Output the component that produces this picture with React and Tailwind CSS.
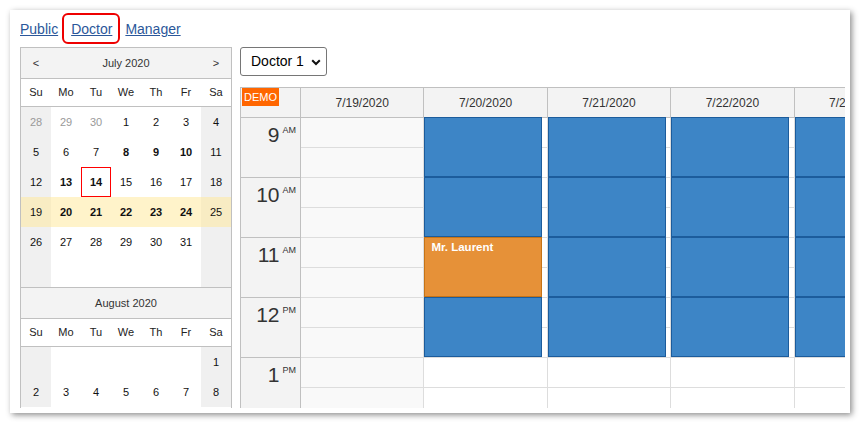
import React from "react";

const julyRows = [
  [{ d: 28, g: true }, { d: 29, g: true }, { d: 30, g: true }, { d: 1 }, { d: 2 }, { d: 3 }, { d: 4 }],
  [{ d: 5 }, { d: 6 }, { d: 7 }, { d: 8, b: true }, { d: 9, b: true }, { d: 10, b: true }, { d: 11 }],
  [{ d: 12 }, { d: 13, b: true }, { d: 14, b: true, t: true }, { d: 15 }, { d: 16 }, { d: 17 }, { d: 18 }],
  [{ d: 19 }, { d: 20, b: true }, { d: 21, b: true }, { d: 22, b: true }, { d: 23, b: true }, { d: 24, b: true }, { d: 25 }],
  [{ d: 26 }, { d: 27 }, { d: 28 }, { d: 29 }, { d: 30 }, { d: 31 }, { d: "" }],
  [{ d: "" }, { d: "" }, { d: "" }, { d: "" }, { d: "" }, { d: "" }, { d: "" }],
];

const augRows = [
  [{ d: "" }, { d: "" }, { d: "" }, { d: "" }, { d: "" }, { d: "" }, { d: 1 }],
  [{ d: 2 }, { d: 3 }, { d: 4 }, { d: 5 }, { d: 6 }, { d: 7 }, { d: 8 }],
];

const dayNames = ["Su", "Mo", "Tu", "We", "Th", "Fr", "Sa"];

function Month({ title, rows, arrows, selRow, bottomBorder }) {
  return (
    <div>
      <div className="grid grid-cols-[repeat(7,30px)] h-[31px] border-b border-[#c0c0c0] bg-[#f3f3f3] items-center text-[#333] text-[11px]">
        <div className="text-center">{arrows ? "<" : ""}</div>
        <div className="col-span-5 text-center">{title}</div>
        <div className="text-center">{arrows ? ">" : ""}</div>
      </div>
      <div className="grid grid-cols-[repeat(7,30px)] h-[28px] border-b border-[#c0c0c0] bg-white items-center text-[#222] text-[11px]">
        {dayNames.map((n) => (
          <div key={n} className="text-center">{n}</div>
        ))}
      </div>
      <div className={"grid grid-cols-[repeat(7,30px)] text-[11px] " + (bottomBorder ? "border-b border-[#c0c0c0]" : "")}>
        {rows.map((row, ri) =>
          row.map((c, ci) => {
            const weekend = ci === 0 || ci === 6;
            const sel = ri === selRow;
            let bg = weekend ? "bg-[#f0f0f0]" : "bg-white";
            if (sel) bg = weekend ? "bg-[#f8ecc3]" : "bg-[#fff3ca]";
            return (
              <div
                key={ri + "-" + ci}
                className={
                  "h-[30px] flex items-center justify-center " +
                  bg +
                  (c.g ? " text-[#999]" : " text-[#111]") +
                  (c.b ? " font-bold" : "") +
                  (c.t ? " border border-[#ff0000]" : "")
                }
              >
                {c.d}
              </div>
            );
          })
        )}
      </div>
    </div>
  );
}

const days = ["7/19/2020", "7/20/2020", "7/21/2020", "7/22/2020", "7/23/2020"];
const hours = [
  { h: "9", s: "AM" },
  { h: "10", s: "AM" },
  { h: "11", s: "AM" },
  { h: "12", s: "PM" },
  { h: "1", s: "PM" },
];
const topClasses = ["top-[-1px]", "top-[59px]", "top-[119px]", "top-[179px]"];

function DayColumn({ label, index }) {
  const weekend = index === 0;
  const hasEvents = index >= 1;
  return (
    <div className="w-[123.4px] shrink-0">
      <div className="h-[30px] bg-[#f3f3f3] border-b border-r border-[#c0c0c0] flex items-center justify-center text-[12px] text-[#333] whitespace-nowrap">
        {label}
      </div>
      <div className="relative">
        {Array.from({ length: 10 }).map((_, i) => (
          <div
            key={i}
            className={"h-[30px] border-b border-r border-[#dddddd] " + (weekend ? "bg-[#f9f9f9]" : "bg-white")}
          />
        ))}
        {hasEvents &&
          topClasses.map((tc, i) => {
            const orange = index === 1 && i === 2;
            return (
              <div
                key={i}
                className={
                  "absolute left-0 w-[118px] h-[60px] border " +
                  tc +
                  (orange
                    ? " bg-[#e69138] border-[#c77416]"
                    : " bg-[#3d85c6] border-[#1c5c9c]")
                }
              >
                {orange && (
                  <div className="pl-[6px] pt-[2px] text-[11.5px] leading-[14px] font-bold text-white">
                    Mr. Laurent
                  </div>
                )}
              </div>
            );
          })}
      </div>
    </div>
  );
}

export default function App() {
  return (
    <div className="w-[860px] h-[423px] bg-white p-[10px] font-['Liberation_Sans',Arial,sans-serif]">
      <div className="w-[840px] h-[403px] bg-white shadow-[2px_2px_6px_rgba(0,0,0,0.45)]">
        <div className="h-[398px] overflow-hidden pl-[10px] pt-[9px]">
          <div className="flex gap-[13px] h-[20px] text-[14px] leading-[20px] text-[#2b579a]">
            <a href="#" className="underline">Public</a>
            <a href="#" className="underline relative">
              Doctor
              <span className="absolute left-[-9px] right-[-8px] top-[-6px] bottom-[-5px] border-2 border-[#ee0000] rounded-[6px]" />
            </a>
            <a href="#" className="underline">Manager</a>
          </div>
          <div className="flex gap-[8px] mt-[8px]">
            <div className="w-[212px] shrink-0 border-l border-r border-t border-[#c0c0c0]">
              <Month title="July 2020" rows={julyRows} arrows selRow={3} bottomBorder />
              <Month title="August 2020" rows={augRows} />
            </div>
            <div className="w-[605px] shrink-0 overflow-hidden">
              <div className="relative w-[87px] h-[29px]">
                <select className="appearance-none w-full h-full border border-[#767676] rounded-[3px] bg-white pl-[10px] text-[14px] text-black">
                  <option>Doctor 1</option>
                  <option>Doctor 2</option>
                </select>
                <svg className="absolute right-[6px] top-[12px] pointer-events-none" width="10" height="7" viewBox="0 0 10 7">
                  <path d="M1.2 1.2L5 5L8.8 1.2" fill="none" stroke="#111" strokeWidth="2" />
                </svg>
              </div>
              <div className="mt-[11px] flex border-l border-t border-[#c0c0c0] w-[700px]">
                <div className="w-[60px] shrink-0">
                  <div className="h-[30px] bg-[#f3f3f3] border-b border-r border-[#c0c0c0] pl-[1px]">
                    <div className="w-fit h-[18px] bg-[#ff6600] text-white text-[11px] leading-[18px] px-[2px]">
                      DEMO
                    </div>
                  </div>
                  {hours.map((h) => (
                    <div
                      key={h.h}
                      className="h-[60px] bg-[#f3f3f3] border-b border-r border-[#c0c0c0] flex justify-end items-start pr-[4px] pt-[6px] text-[#333]"
                    >
                      <span className="text-[21px] leading-[21px]">{h.h}</span>
                      <span className="text-[9px] leading-[9px] ml-[3px] mt-[2px]">{h.s}</span>
                    </div>
                  ))}
                </div>
                {days.map((d, i) => (
                  <DayColumn key={d} label={d} index={i} />
                ))}
              </div>
            </div>
          </div>
        </div>
      </div>
    </div>
  );
}
